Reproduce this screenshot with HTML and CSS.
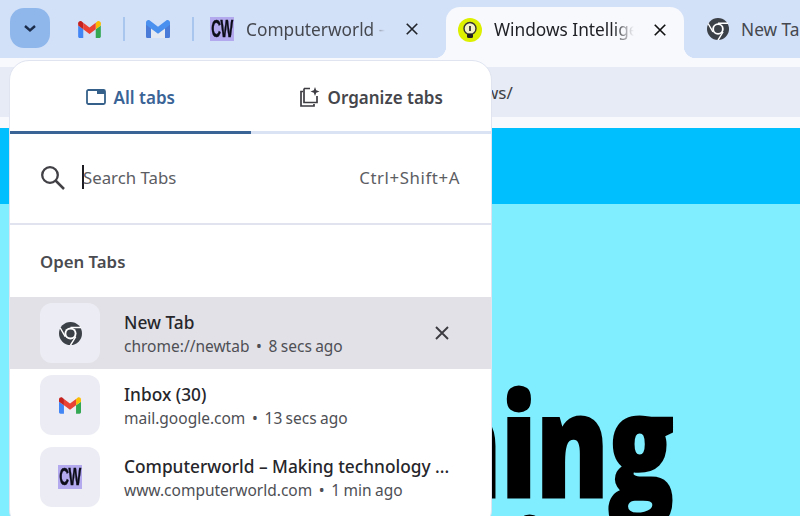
FILE: index.html
```html
<!DOCTYPE html>
<html lang="en">
<head>
    <meta charset="UTF-8">
    <meta name="viewport" content="width=device-width, initial-scale=1.0">
    <title>Tab search</title>
    <link rel="stylesheet" href="styles.css">
</head>
<body>
    <svg class="defs" width="0" height="0">
        <symbol id="gmail" viewBox="0 0 24 18">
            <path d="M1.6 18H5.4V8.8L0 4.8V16.4C0 17.3.7 18 1.6 18Z" fill="#4285f4"/>
            <path d="M18.6 18H22.4C23.3 18 24 17.3 24 16.4V4.8L18.6 8.8Z" fill="#34a853"/>
            <path d="M18.6 1.8V8.8L24 4.8V2.4C24 .4 21.7-.7 20.2.5Z" fill="#fbbc04"/>
            <path d="M5.4 8.8V1.8L12 6.8 18.6 1.8V8.8L12 13.7Z" fill="#ea4335"/>
            <path d="M0 2.4V4.8L5.4 8.8V1.8L3.8.5C2.3-.7 0 .4 0 2.4Z" fill="#c5221f"/>
        </symbol>
        <symbol id="chrome" viewBox="0 0 24 24">
            <circle cx="12" cy="12" r="12" fill="#3c4047"/>
            <circle cx="12" cy="12" r="6.3" fill="#fff"/>
            <circle cx="12" cy="12" r="4.3" fill="#3c4047"/>
            <path d="M12 5.7H23M6.5 15.2 1.2 6M17.5 15.2 12 24.2" stroke="#fff" stroke-width="1.5" fill="none"/>
        </symbol>
        <symbol id="close" viewBox="0 0 16 16">
            <path d="M2 2 14 14M14 2 2 14" fill="none" stroke="currentColor" stroke-width="1.9"/>
        </symbol>
    </svg>

    <div class="tabstrip">
        <button class="menu-btn">
            <svg width="14" height="9" viewBox="0 0 14 9"><path d="M2 2 7 6.5 12 2" fill="none" stroke="#1b2c4a" stroke-width="2.4"/></svg>
        </button>
        <div class="pinned">
            <svg class="pin-icon" width="23" height="17"><use href="#gmail"/></svg>
        </div>
        <span class="sep"></span>
        <div class="pinned">
            <svg class="pin-icon" width="24" height="18" viewBox="0 0 24 18">
                <path d="M0 2V16.4C0 17.3.7 18 1.6 18H22.4C23.3 18 24 17.3 24 16.4V2L12 11Z" fill="#e4e9f2"/>
                <path d="M0 16.4C0 17.3.7 18 1.6 18H5V7.5L0 3.5ZM24 16.4C24 17.3 23.3 18 22.4 18H19V7.5L24 3.5Z" fill="#4a7bd8"/>
                <path d="M0 2.4C0 .4 2.3-.7 3.8.5L12 6.8 20.2.5C21.7-.7 24 .4 24 2.4V4.8L12 13.7 0 4.8Z" fill="#4a90ee"/>
            </svg>
        </div>
        <span class="sep"></span>
        <div class="tab tab-cw">
            <span class="cw-logo"><span class="cw-text">CW</span></span>
            <span class="tab-title">Computerworld – Making technology</span>
            <svg class="tab-close" width="14" height="14"><use href="#close"/></svg>
        </div>
        <div class="tab tab-active">
            <svg class="tab-favicon" width="24" height="24" viewBox="0 0 24 24">
                <circle cx="12" cy="12" r="12" fill="#dcf000"/>
                <circle cx="12" cy="10.5" r="6" fill="#f4f2c8" stroke="#333" stroke-width="1.4"/>
                <path d="M12 8V13" stroke="#333" stroke-width="1.8"/>
                <rect x="9" y="15.5" width="6" height="4.5" rx="1.5" fill="#222"/>
            </svg>
            <span class="tab-title">Windows Intelligence explained</span>
            <svg class="tab-close" width="14" height="14"><use href="#close"/></svg>
        </div>
        <div class="tab tab-new">
            <svg class="tab-favicon" width="22" height="22"><use href="#chrome"/></svg>
            <span class="tab-title">New Tab</span>
        </div>
    </div>

    <div class="toolbar">
        <div class="address">www.computerworld.com/article/windows/</div>
    </div>

    <div class="hero-band"></div>
    <div class="hero">
        <div class="headline">ning</div>
        <div class="headline headline-next">i</div>
    </div>

    <div class="popup">
        <div class="popup-tabs">
            <div class="popup-tab on">
                <svg width="20" height="16" viewBox="0 0 20 16">
                    <rect x="1" y="1" width="18" height="14" rx="1.5" fill="none" stroke="#356089" stroke-width="1.8"/>
                    <rect x="11" y="1" width="8" height="4" fill="#356089"/>
                </svg>
                All tabs
            </div>
            <div class="popup-tab">
                <svg width="21" height="21" viewBox="0 0 21 21">
                    <path d="M4 4.5H2V19H15V17M5 1.5H11M5 1.5V15.5H18V9" fill="none" stroke="#3c3c42" stroke-width="1.7"/>
                    <path d="M16 0 17.2 3.3 20.5 4.5 17.2 5.7 16 9 14.8 5.7 11.5 4.5 14.8 3.3Z" fill="#3c3c42"/>
                </svg>
                Organize tabs
            </div>
        </div>

        <div class="search-row">
            <svg width="25" height="25" viewBox="0 0 25 25">
                <circle cx="10" cy="10" r="7.8" fill="none" stroke="#414146" stroke-width="2.3"/>
                <path d="M15.5 15.5 24 24" stroke="#414146" stroke-width="2.5"/>
            </svg>
            <span class="caret"></span>
            <span class="search-label">Search Tabs</span>
            <span class="shortcut">Ctrl+Shift+A</span>
        </div>

        <div class="section-title">Open Tabs</div>

        <div class="tab-row hover">
            <div class="row-icon"><svg width="23" height="23"><use href="#chrome"/></svg></div>
            <div class="row-text">
                <div class="row-title">New Tab</div>
                <div class="row-sub">chrome://newtab&nbsp; •&nbsp; 8 secs ago</div>
            </div>
            <svg class="row-close" width="16" height="16"><use href="#close"/></svg>
        </div>
        <div class="tab-row">
            <div class="row-icon"><svg width="22" height="17"><use href="#gmail"/></svg></div>
            <div class="row-text">
                <div class="row-title">Inbox (30)</div>
                <div class="row-sub">mail.google.com&nbsp; •&nbsp; 13 secs ago</div>
            </div>
        </div>
        <div class="tab-row">
            <div class="row-icon"><span class="cw-logo"><span class="cw-text">CW</span></span></div>
            <div class="row-text">
                <div class="row-title">Computerworld – Making technology ...</div>
                <div class="row-sub">www.computerworld.com&nbsp; •&nbsp; 1 min ago</div>
            </div>
        </div>
    </div>
</body>
</html>
```

FILE: styles.css
```css
* {
    box-sizing: border-box;
}

html,
body {
    margin: 0;
    height: 516px;
    overflow: hidden;
}

body {
    position: relative;
    font-family: "Noto Sans", "Open Sans", sans-serif;
    background: #80eeff;
    color: #1f1f24;
}

.defs {
    position: absolute;
}

/* tab strip */
.tabstrip {
    display: flex;
    align-items: flex-start;
    height: 58px;
    padding: 8px 0 0 10px;
    background: #d3e1f8;
    overflow: hidden;
}

.menu-btn {
    flex: none;
    width: 40px;
    height: 40px;
    margin-right: 18px;
    padding: 0;
    border: 0;
    border-radius: 14px;
    background: #8fb7ec;
    display: flex;
    align-items: center;
    justify-content: center;
}

.pinned {
    flex: none;
    width: 46px;
    height: 42px;
    display: flex;
    align-items: center;
    justify-content: center;
    margin: 0 11px 0 -2px;
}

.sep {
    flex: none;
    width: 2px;
    height: 24px;
    margin: 9px 12px 0 0;
    background: #a9c7ee;
}

.tab {
    flex: none;
    display: flex;
    align-items: center;
    height: 50px;
    font-size: 17.3px;
    color: #45484f;
}

.tab-title {
    flex: 1;
    white-space: nowrap;
    overflow: hidden;
    margin-top: -8px;
}

.tab-close {
    flex: none;
    margin-top: -8px;
    color: #22252b;
}

.tab-cw {
    width: 240px;
    padding: 0 27px 0 0;
}

.tab-cw .cw-logo {
    margin: -8px 12px 0 4px;
}

.tab-cw .tab-title {
    -webkit-mask-image: linear-gradient(90deg, #000 90%, transparent 100%);
    mask-image: linear-gradient(90deg, #000 90%, transparent 100%);
    margin-right: 20px;
}

.tab-active {
    position: relative;
    width: 238px;
    height: 51px;
    margin: -1px 23px 0 0;
    padding: 0 17px 0 12px;
    border-radius: 14px 14px 0 0;
    background: #f8f9fd;
    color: #202227;
}

/* 탭 아래쪽 둥근 모서리 */
.tab-active::before,
.tab-active::after {
    content: '';
    position: absolute;
    bottom: 0;
    width: 12px;
    height: 12px;
}

.tab-active::before {
    left: -12px;
    background: radial-gradient(circle at 0 0, transparent 12px, #f8f9fd 12.5px);
}

.tab-active::after {
    right: -12px;
    background: radial-gradient(circle at 100% 0, transparent 12px, #f8f9fd 12.5px);
}

.tab-active .tab-title {
    margin: -6px 19px 0 0;
    -webkit-mask-image: linear-gradient(90deg, #000 85%, transparent 100%);
    mask-image: linear-gradient(90deg, #000 85%, transparent 100%);
}

.tab-active .tab-close {
    margin-top: -6px;
    color: #111;
}

.tab-favicon {
    flex: none;
    margin-right: 12px;
}

.tab-active .tab-favicon {
    margin-top: -6px;
}

.tab-new .tab-favicon {
    margin-top: -8px;
}

.tab-new {
    width: 120px;
}

.cw-logo {
    flex: none;
    display: inline-block;
    width: 24px;
    height: 24px;
    background: #b3a9ee;
    color: #0c0c18;
    font-family: "Liberation Sans", sans-serif;
    font-size: 24px;
    font-weight: 700;
    line-height: 24px;
    text-align: center;
    overflow: hidden;
}

.cw-text {
    display: block;
    width: 40px;
    margin-left: -8px;
    letter-spacing: -1px;
    transform: scaleX(0.56);
    -webkit-text-stroke: 0.5px #0c0c18;
}

/* toolbar */
.toolbar {
    height: 70px;
    padding: 9px 0 11px;
    background: #f8f9fd;
}

.address {
    height: 50px;
    background: #e6ebf5;
    color: #3e4046;
    font-size: 17px;
    line-height: 52px;
    white-space: nowrap;
    padding-left: 168px;
}

/* page behind the popup */
.hero-band {
    height: 76px;
    background: #00bfff;
}

.hero {
    height: 312px;
    overflow: hidden;
    background: #80eeff;
}

.headline {
    width: 300px;
    height: 117px;
    margin: 180px 0 0 429px;
    color: #000;
    font-family: "Open Sans", sans-serif;
    font-size: 141px;
    font-weight: 800;
    line-height: 117px;
    white-space: nowrap;
    -webkit-text-stroke: 3px #000;
    transform: scaleX(0.765);
    transform-origin: left top;
}

.headline-next {
    margin: 12px 0 0 512px;
}

/* tab search popup */
.popup {
    position: absolute;
    left: 9px;
    top: 60px;
    width: 483px;
    height: 470px;
    background: #fff;
    border: 1px solid #dfe4f0;
    border-radius: 20px;
    overflow: hidden;
}

.popup-tabs {
    display: flex;
    height: 73px;
}

.popup-tab {
    flex: 1;
    display: flex;
    align-items: center;
    justify-content: center;
    gap: 8px;
    padding-top: 2px;
    border-bottom: 3px solid #d9e3f4;
    color: #45464c;
    font-size: 17px;
    font-weight: 600;
}

.popup-tab.on {
    border-bottom-color: #3a6496;
    color: #3a6496;
}

.search-row {
    display: flex;
    align-items: center;
    height: 91px;
    padding: 0 31px 3px 30px;
    border-bottom: 2px solid #e1e3ee;
    color: #5c5d63;
    font-size: 16.8px;
}

.caret {
    flex: none;
    width: 2px;
    height: 24px;
    margin: 0 -1px 0 17px;
    background: #1d1d22;
}

.search-label {
    flex: 1;
}

.shortcut {
    letter-spacing: 0.6px;
}

.section-title {
    height: 72px;
    padding: 25px 0 0 30px;
    color: #4a4b50;
    font-size: 16.8px;
    font-weight: 600;
    line-height: 24px;
}

.tab-row {
    display: flex;
    align-items: center;
    height: 72px;
    padding: 0 41px 0 30px;
}

.tab-row.hover {
    background: #e2e1e7;
}

.row-icon {
    flex: none;
    display: flex;
    align-items: center;
    justify-content: center;
    width: 60px;
    height: 60px;
    margin-right: 24px;
    border-radius: 12px;
    background: #ecedf4;
}

.row-text {
    flex: 1;
    min-width: 0;
    padding-top: 2px;
}

.row-title {
    color: #26262b;
    font-size: 17.3px;
    font-weight: 500;
    line-height: 24px;
    white-space: nowrap;
}

.row-sub {
    color: #4e4f55;
    font-size: 15.5px;
    line-height: 22px;
    white-space: nowrap;
    word-spacing: -0.7px;
}

.row-close {
    flex: none;
    color: #3b3b41;
}
```
